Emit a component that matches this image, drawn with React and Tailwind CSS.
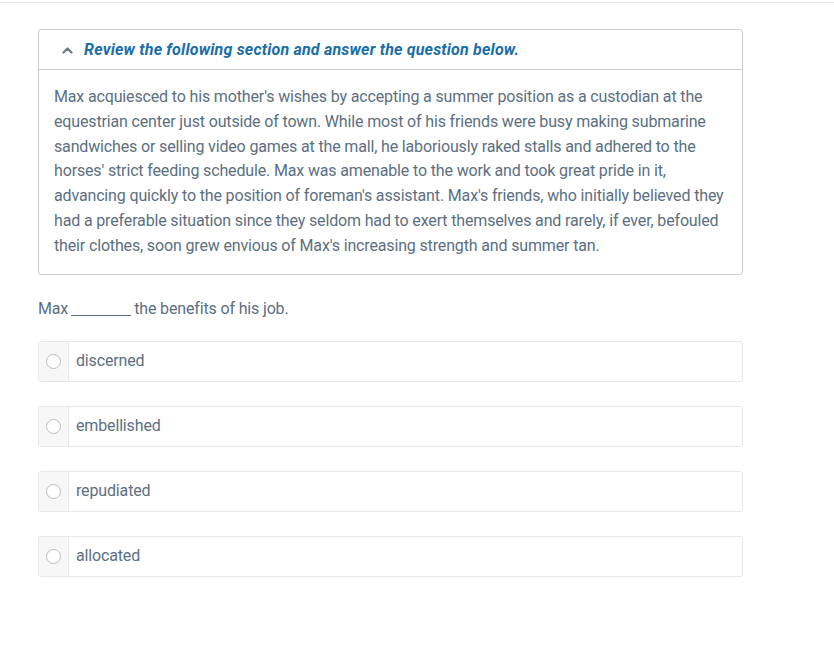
import React from "react";

const options = ["discerned", "embellished", "repudiated", "allocated"];

function Chevron() {
  return (
    <svg width="11" height="8" viewBox="0 0 11 8" className="shrink-0">
      <path d="M1.5 6.5 L5.5 2.5 L9.5 6.5" fill="none" stroke="#6b7a88" strokeWidth="2.2" strokeLinecap="round" strokeLinejoin="round" />
    </svg>
  );
}

export default function App() {
  return (
    <div className="min-h-[647px] w-[834px] bg-white" style={{ fontFamily: "Roboto, 'Liberation Sans', sans-serif" }}>
      <div className="mt-[2px] h-px w-full bg-[#e6e6e6]" />
      <div className="pl-[38px] pt-[26px] w-[743px] box-content">
        <div className="w-[705px] rounded-[3px] border border-[#cccccc]">
          <div className="flex h-[40px] items-center gap-[11px] border-b border-[#cccccc] pl-[23px]">
            <Chevron />
            <span className="text-[16px] font-bold italic text-[#1a6ea6] tracking-[0.2px]">
              Review the following section and answer the question below.
            </span>
          </div>
          <div className="px-[15px] pt-[15px] pb-[15px] text-[16px] leading-[24.8px] text-[#5c6f80] tracking-[-0.15px]">
            Max acquiesced to his mother's wishes by accepting a summer position as a custodian at the equestrian center just outside of town. While most of his friends were busy making submarine sandwiches or selling video games at the mall, he laboriously raked stalls and adhered to the horses' strict feeding schedule. Max was amenable to the work and took great pride in it, advancing quickly to the position of foreman's assistant. Max's friends, who initially believed they had a preferable situation since they seldom had to exert themselves and rarely, if ever, befouled their clothes, soon grew envious of Max's increasing strength and summer tan.
          </div>
        </div>
        <div className="mt-[24px] flex items-end text-[16px] leading-[20px] text-[#5c6f80] tracking-[-0.15px]">
          <span>Max</span>
          <span className="ml-[3px] mr-[3px] mb-[3px] inline-block h-px w-[60px] bg-[#5c6f80]" />
          <span>the benefits of his job.</span>
        </div>
        <div className="mt-[22px] flex w-[705px] flex-col gap-[24px]">
          {options.map((o) => (
            <div key={o} className="flex h-[41px] overflow-hidden rounded-[3px] border border-[#e8e8e8]">
              <div className="flex w-[30px] items-center justify-center border-r border-[#e8e8e8] bg-[#f7f7f7]">
                <span className="block h-[15px] w-[15px] rounded-full border border-[#bdbdbd] bg-white" />
              </div>
              <div className="flex items-center pl-[7px] text-[16px] text-[#5c6f80] tracking-[-0.15px]">{o}</div>
            </div>
          ))}
        </div>
      </div>
    </div>
  );
}
